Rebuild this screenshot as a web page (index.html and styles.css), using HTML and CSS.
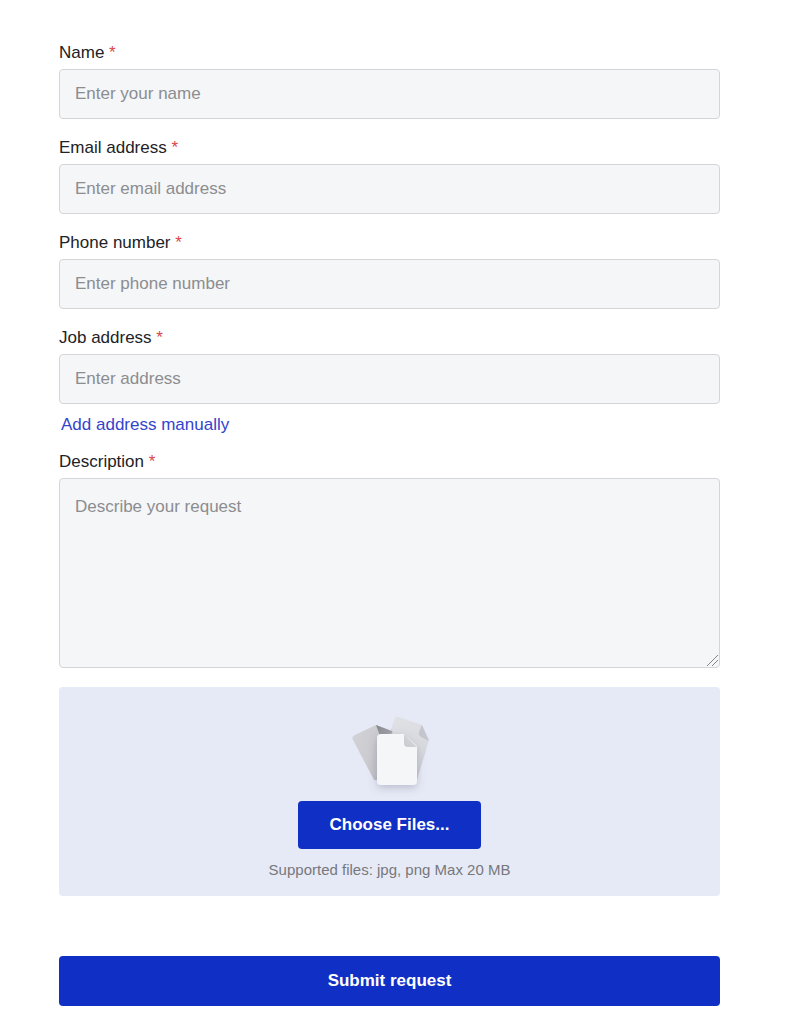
FILE: index.html
```html
<!DOCTYPE html>
<html lang="en">
<head>
<meta charset="utf-8">
<meta name="viewport" content="width=device-width, initial-scale=1">
<title>Request form</title>
<link rel="stylesheet" href="styles.css">
</head>
<body>
<form class="request-form">
  <div class="field">
    <label class="label" for="name">Name <span class="required">*</span></label>
    <input class="control" id="name" type="text" placeholder="Enter your name">
  </div>
  <div class="field">
    <label class="label" for="email">Email address <span class="required">*</span></label>
    <input class="control" id="email" type="email" placeholder="Enter email address">
  </div>
  <div class="field">
    <label class="label" for="phone">Phone number <span class="required">*</span></label>
    <input class="control" id="phone" type="tel" placeholder="Enter phone number">
  </div>
  <div class="field field-address">
    <label class="label" for="address">Job address <span class="required">*</span></label>
    <input class="control" id="address" type="text" placeholder="Enter address">
  </div>
  <a class="manual-link" href="#manual">Add address manually</a>
  <div class="field">
    <label class="label" for="description">Description <span class="required">*</span></label>
    <textarea class="control control-area" id="description" placeholder="Describe your request"></textarea>
  </div>
  <section class="upload">
    <svg class="upload-icon" width="100" height="90" viewBox="0 0 100 90" aria-hidden="true">
      <defs>
        <linearGradient id="back-left" x1="0" y1="0" x2="1" y2="0.4">
          <stop offset="0" stop-color="#d2d2d7"/>
          <stop offset="0.5" stop-color="#cbcbd0"/>
          <stop offset="1" stop-color="#b4b4bc"/>
        </linearGradient>
        <linearGradient id="back-right" x1="0.3" y1="0" x2="0.5" y2="1">
          <stop offset="0" stop-color="#e0e1e5"/>
          <stop offset="0.6" stop-color="#d8d9de"/>
          <stop offset="1" stop-color="#c9cad4"/>
        </linearGradient>
        <linearGradient id="fold-dark" x1="0" y1="0" x2="1" y2="0.6">
          <stop offset="0" stop-color="#85868b"/>
          <stop offset="1" stop-color="#a3a4aa"/>
        </linearGradient>
        <linearGradient id="fold-light" x1="1" y1="0" x2="0" y2="1">
          <stop offset="0" stop-color="#d9dadd"/>
          <stop offset="1" stop-color="#c9cacf"/>
        </linearGradient>
        <filter id="sheet-shadow" x="-40%" y="-40%" width="180%" height="180%">
          <feDropShadow dx="0" dy="3" stdDeviation="4" flood-color="#62647a" flood-opacity="0.32"/>
        </filter>
      </defs>
      <path d="M55 7Q56 5 59 6L82 14L89 29L77 69H48V27Z" fill="url(#back-right)"/>
      <path d="M82 14L89 30L81 26Q78 24 79 21Z" fill="#c5c6cd"/>
      <path d="M15 24L36 14L52 21L60 68L37 69Q34 70 33 67L13 29Q11 26 15 24Z" fill="url(#back-left)"/>
      <path d="M36 14L52 20Q53 21 52 22L40 25Z" fill="url(#fold-dark)"/>
      <path d="M41 23H64L77 35V70Q77 74 73 74H41Q37 74 37 70V27Q37 23 41 23Z" fill="#f4f6f8" filter="url(#sheet-shadow)"/>
      <path d="M64 23L77 36H68Q64 36 64 32Z" fill="url(#fold-light)"/>
    </svg>
    <button class="button button-choose" type="button">Choose Files...</button>
    <p class="upload-hint">Supported files: jpg, png Max 20 MB</p>
  </section>
  <button class="button button-submit" type="submit">Submit request</button>
</form>
</body>
</html>
```

FILE: styles.css
```css
* {
  box-sizing: border-box;
}

body {
  margin: 0;
  background: #fff;
  color: #222226;
  font-family: "Liberation Sans", Arial, sans-serif;
  font-size: 17px;
  line-height: 20px;
}

.request-form {
  display: flex;
  flex-direction: column;
  padding: 43px 66px 24px 59px;
}

.field {
  display: flex;
  flex-direction: column;
  gap: 6px;
  margin-bottom: 19px;
}

.field-address {
  margin-bottom: 11px;
}

.required {
  color: #dc4549;
}

.control {
  width: 100%;
  height: 50px;
  margin: 0;
  padding: 0 15px;
  border: 1px solid #d3d5d8;
  border-radius: 4px;
  background: #f4f6f8;
  color: #222226;
  font: inherit;
}

.control::placeholder {
  color: #8c8d90;
  opacity: 1;
}

.control-area {
  height: 190px;
  padding: 18px 15px;
  resize: vertical;
}

/* Two diagonal strokes of the drag handle */
.control-area::-webkit-resizer {
  background: linear-gradient(135deg,
    transparent 58%, #85868a 59%, #85868a 63%, transparent 64%,
    transparent 75%, #85868a 76%, #85868a 80%, transparent 81%) 0 0 / 14px 14px no-repeat;
}

.manual-link {
  align-self: flex-start;
  margin: 0 0 17px 2px;
  color: #3344cc;
  text-decoration: none;
}

.upload {
  display: flex;
  flex-direction: column;
  align-items: center;
  padding: 24px 16px 16px;
  border-radius: 4px;
  background: #e6eaf6;
}

.upload-icon {
  display: block;
}

.upload-hint {
  margin: 11px 0 0;
  color: #77787c;
  font-size: 15px;
}

.button {
  border: 0;
  border-radius: 4px;
  background: #102fc4;
  color: #fff;
  font: inherit;
  font-weight: 700;
  cursor: pointer;
}

.button-choose {
  height: 48px;
  padding: 0 32px;
}

.button-submit {
  height: 50px;
  margin-top: 60px;
}
```
